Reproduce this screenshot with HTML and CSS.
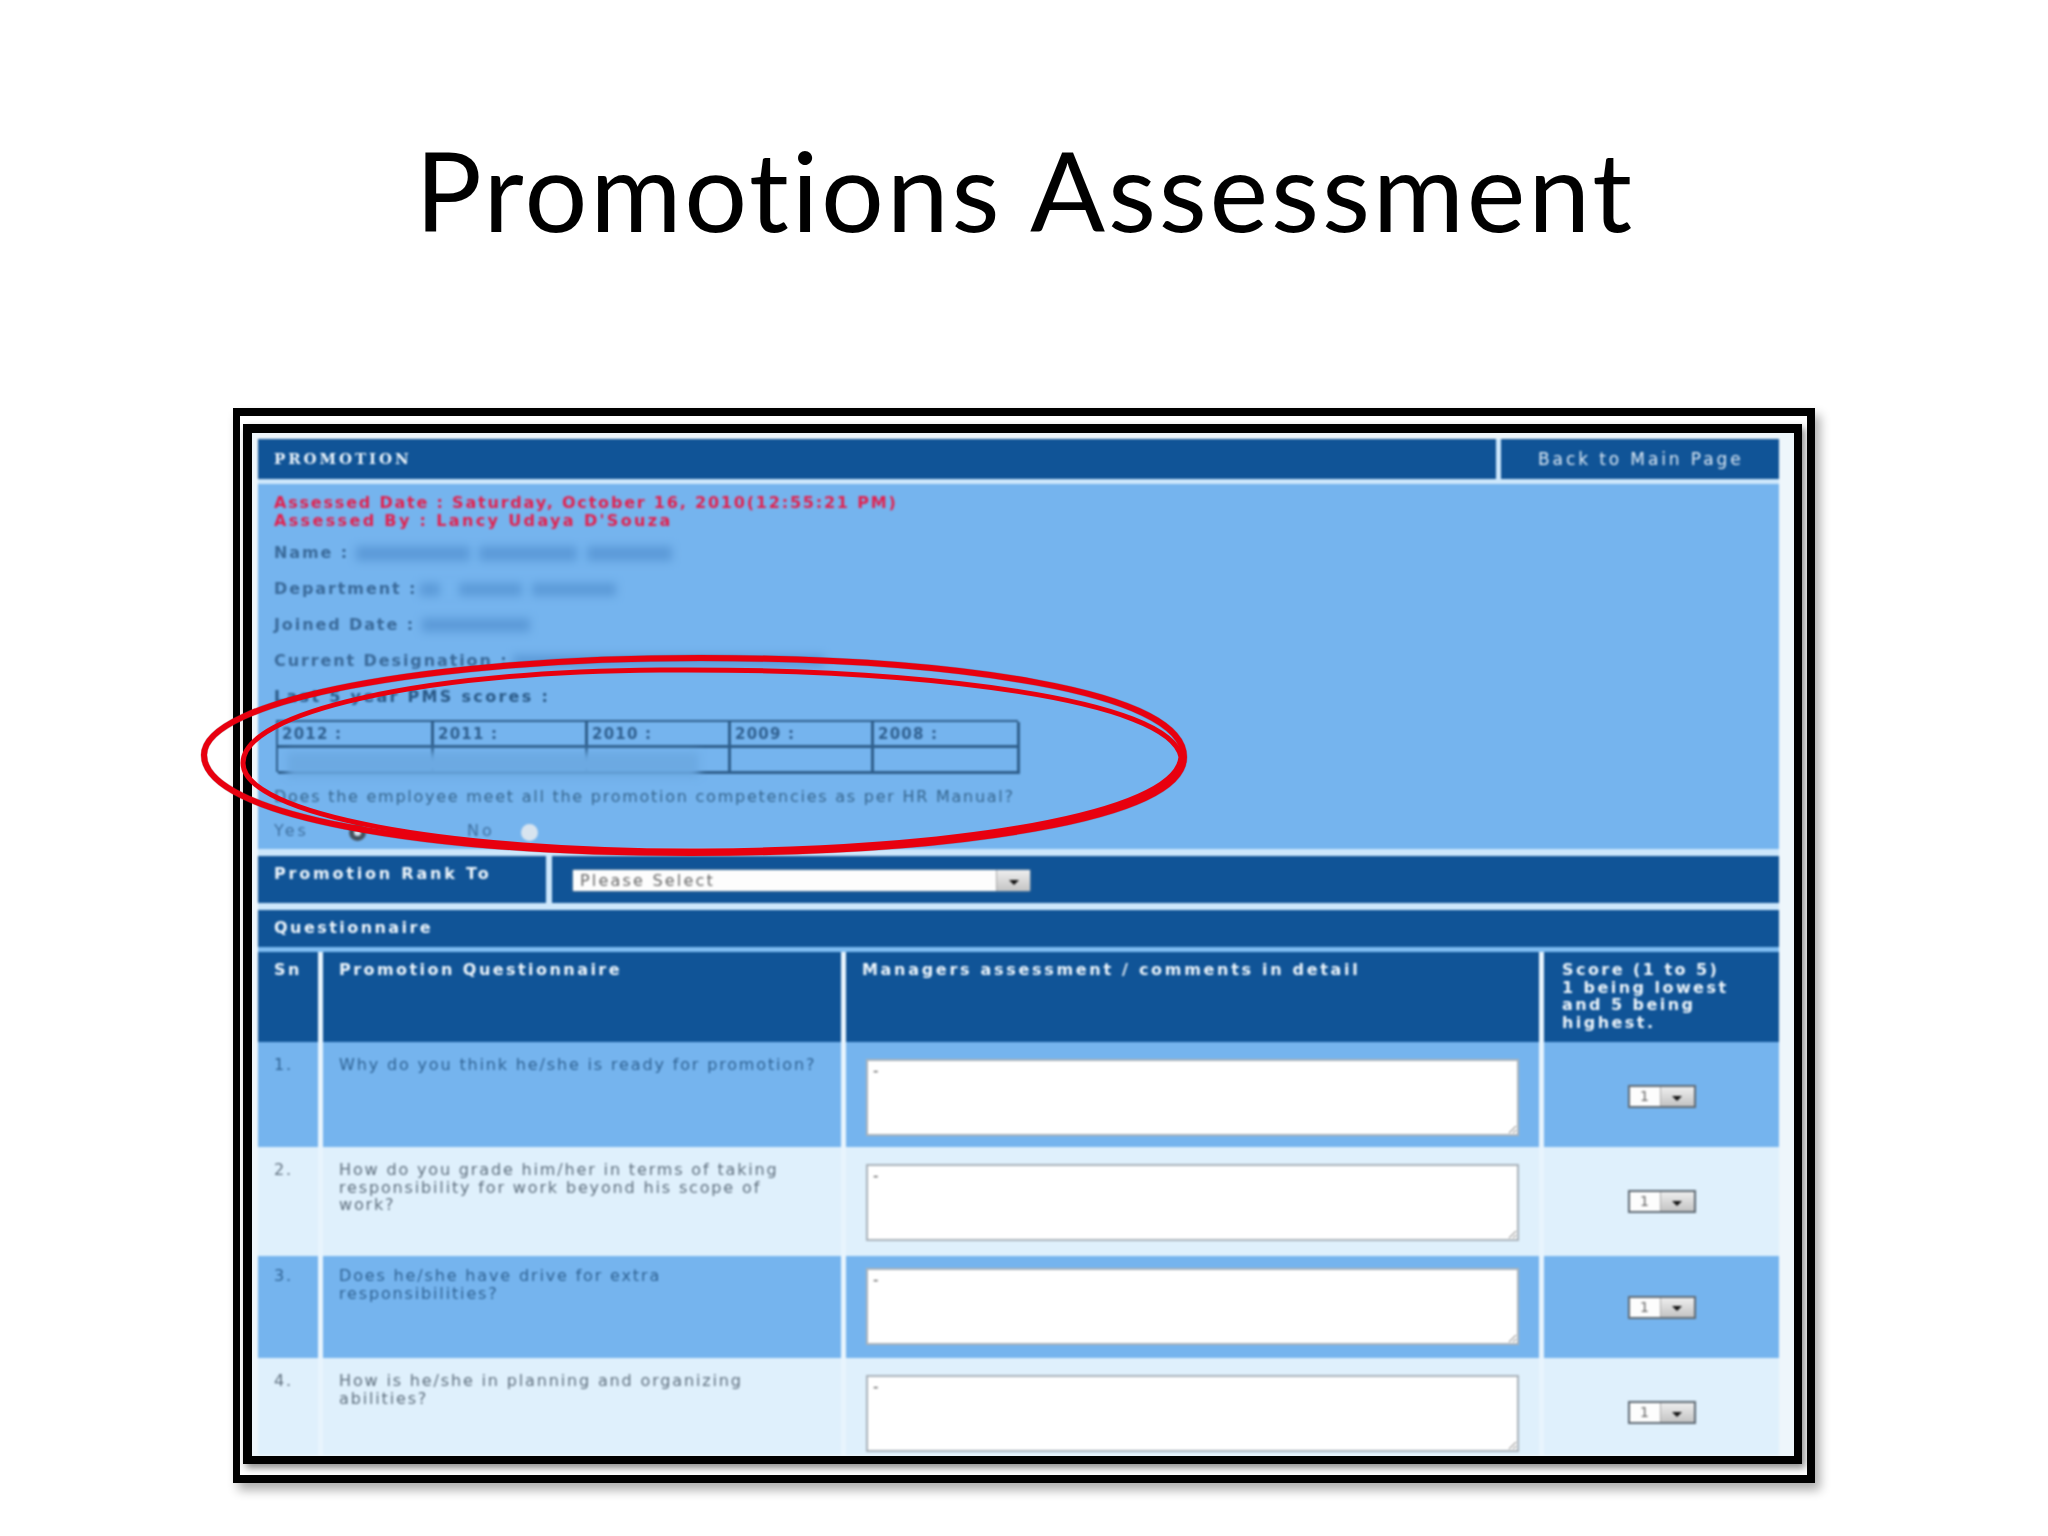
FILE: index.html
```html
<!DOCTYPE html>
<html lang="en">
<head>
<meta charset="utf-8">
<title>Promotions Assessment</title>
<link rel="stylesheet" href="styles.css">
</head>
<body>
<main class="slide">
  <h1 class="title">Promotions Assessment</h1>
  <div class="frame">
    <div class="frame-inner">
      <div class="shot">
        <div class="bar-top">
          <div class="dark cell-title strong">PROMOTION</div>
          <div class="dark cell-back">Back to Main Page</div>
        </div>
        <section class="panel">
          <div class="assessed">
            <div>Assessed Date : Saturday, October 16, 2010(12:55:21 PM)</div>
            <div class="assessed-by">Assessed By : Lancy Udaya D'Souza</div>
          </div>
          <div class="info"><span>Name :</span><i class="smudge smudge-name"></i></div>
          <div class="info"><span>Department :</span><i class="smudge smudge-dept"></i></div>
          <div class="info"><span>Joined Date :</span><i class="smudge smudge-date"></i></div>
          <div class="info"><span>Current Designation :</span><i class="smudge smudge-desig"></i></div>
          <div class="info info-last"><span>Last 5 year PMS scores :</span></div>
          <div class="scores">
            <div class="score-h">2012 :</div><div class="score-h">2011 :</div><div class="score-h">2010 :</div><div class="score-h">2009 :</div><div class="score-h">2008 :</div>
            <div class="score-v"></div><div class="score-v"></div><div class="score-v"></div><div class="score-v"></div><div class="score-v"></div>
            <i class="smudge smudge-scores"></i>
          </div>
          <div class="meet">Does the employee meet all the promotion competencies as per HR Manual?</div>
          <div class="answer">
            <span class="answer-yes">Yes</span><span class="radio radio-on"></span>
            <span class="answer-no">No</span><span class="radio"></span>
          </div>
        </section>
        <div class="bar-rank">
          <div class="dark rank-label strong">Promotion Rank To</div>
          <div class="dark rank-field">
            <div class="select select-wide"><span class="select-value">Please Select</span><span class="select-btn"></span></div>
          </div>
        </div>
        <div class="dark bar-q strong">Questionnaire</div>
        <div class="qgrid">
          <div class="dark qhead strong">Sn</div>
          <div class="dark qhead strong">Promotion Questionnaire</div>
          <div class="dark qhead strong qhead-wide">Managers assessment / comments in detail</div>
          <div class="dark qhead strong qhead-score">Score (1 to 5)<br>1 being lowest<br>and 5 being<br>highest.</div>

          <div class="q q-mid">1.</div>
          <div class="q q-mid">Why do you think he/she is ready for promotion?</div>
          <div class="q-mid q-box"><textarea class="answer-box" readonly>-</textarea></div>
          <div class="q-mid q-score q-score-low"><div class="select"><span class="select-value">1</span><span class="select-btn"></span></div></div>

          <div class="q q-pale">2.</div>
          <div class="q q-pale">How do you grade him/her in terms of taking responsibility for work beyond his scope of work?</div>
          <div class="q-pale q-box"><textarea class="answer-box" readonly>-</textarea></div>
          <div class="q-pale q-score"><div class="select"><span class="select-value">1</span><span class="select-btn"></span></div></div>

          <div class="q q-mid q-high">3.</div>
          <div class="q q-mid q-high">Does he/she have drive for extra responsibilities?</div>
          <div class="q-mid q-box q-box-high"><textarea class="answer-box" readonly>-</textarea></div>
          <div class="q-mid q-score"><div class="select"><span class="select-value">1</span><span class="select-btn"></span></div></div>

          <div class="q q-pale">4.</div>
          <div class="q q-pale">How is he/she in planning and organizing abilities?</div>
          <div class="q-pale q-box"><textarea class="answer-box" readonly>-</textarea></div>
          <div class="q-pale q-score q-score-low"><div class="select"><span class="select-value">1</span><span class="select-btn"></span></div></div>
        </div>
      </div>
    </div>
  </div>
  <svg class="marker" viewBox="0 0 2048 1536" aria-hidden="true">
    <path class="ring-shade" d="M1184 757C1184 690 950 658 700 658C430 658 204 700 204 755C204 815 420 853 690 853C950 853 1184 820 1184 757Z"/>
    <path class="ring" d="M1184 757C1184 690 950 658 700 658C430 658 204 700 204 755C204 815 420 853 690 853C950 853 1184 820 1184 757Z"/>
    <path class="ring ring-thin" d="M1181 757C1170 700 930 668 660 670C420 672 243 712 243 763C243 815 450 852 700 851C950 850 1176 815 1181 757Z"/>
  </svg>
</main>
</body>
</html>
```
FILE: styles.css
```css
* { box-sizing: border-box; }
html, body { margin: 0; padding: 0; background: #fff; }
body { width: 2048px; height: 1536px; overflow: hidden; }
.slide { position: relative; width: 2048px; height: 1536px; padding-top: 1px; }
.title {
  margin: 0;
  height: 407px;
  padding: 118px 0 0 2px;
  font: 400 111px/140px "Lato", "Open Sans", sans-serif;
  font-variant-ligatures: none;
  letter-spacing: 2.8px;
  color: #000;
  text-align: center;
}
.frame {
  width: 1582px;
  height: 1075px;
  margin-left: 233px;
  border: solid #000;
  border-width: 8px 8px 8px 7px;
  padding: 8px 5px 12px 3px;
  background: #fff;
  box-shadow: 5px 7px 10px rgba(0, 0, 0, .32);
}
.frame-inner {
  height: 1040px;
  border: solid #000;
  border-width: 9px 8px 8px 9px;
  padding: 6px 14px 0 6px;
  background: #eef6fb;
  box-shadow: 3px 4px 7px rgba(0, 0, 0, .45);
  overflow: hidden;
}
.shot {
  width: 1521px;
  height: 1016px;
  overflow: hidden;
  background: #cde7fb;
  font: 400 16px/18px "DejaVu Sans", "Liberation Sans", sans-serif;
  letter-spacing: 1.85px;
  filter: blur(.8px);
}
.dark { background: #105497; color: #eef6fc; }
.strong { font-weight: 700; letter-spacing: 2.45px; }
.bar-top { display: grid; grid-template-columns: 1fr 278px; column-gap: 5px; height: 39px; }
.cell-title.strong { padding: 11px 16px; font-family: "DejaVu Serif", "DejaVu Sans", serif; font-size: 15px; letter-spacing: 2.9px; }
.cell-back { padding: 11px 0 0 37px; font-size: 17px; letter-spacing: 2.9px; color: #dfebf6; }
.panel { height: 365px; margin-top: 6px; padding: 10px 16px 0; background: #75b4ee; color: #2f5f8f; position: relative; }
.assessed { color: #e3204e; font-weight: 700; letter-spacing: 1.8px; }
.assessed div { height: 18px; }
.assessed-by { letter-spacing: 2.35px; }
.info { display: flex; align-items: center; height: 18px; margin-top: 18px; font-weight: 700; color: #3a6a9a; letter-spacing: 1.9px; }
.assessed + .info { margin-top: 14px; }
.info-last { color: #2a5a88; letter-spacing: 2.3px; }
.smudge { display: block; background: #5c9ad8; filter: blur(4.5px); }
.smudge-name {
  width: 316px;
  height: 15px;
  margin-left: 7px;
  background: linear-gradient(90deg, #5c9ad8 0 36%, #75b4ee 36% 39%, #5c9ad8 39% 70%, #75b4ee 70% 73%, #5c9ad8 73%);
}
.smudge-dept {
  width: 196px;
  height: 13px;
  margin-left: 3px;
  background: linear-gradient(90deg, #5c9ad8 0 10%, #75b4ee 10% 20%, #5c9ad8 20% 52%, #75b4ee 52% 57%, #5c9ad8 57%);
}
.smudge-date { width: 108px; height: 14px; margin-left: 7px; }
.smudge-desig { width: 311px; height: 12px; margin-left: 4px; }
.scores {
  position: relative;
  display: grid;
  grid-template-columns: 156px 154px 143px 143px 146px;
  grid-template-rows: 26px 26px;
  width: 742px;
  height: 52px;
  margin: 14px 0 0 2px;
  border: solid #2f5f8c;
  border-width: 2px 0 0 2px;
  color: #2f5f8f;
  font-size: 15px;
  font-weight: 700;
  letter-spacing: 1.2px;
}
.score-h, .score-v { border: solid #2f5f8c; border-width: 0 3px 3px 0; padding: 3px 4px; }
.smudge-scores { position: absolute; left: 9px; top: 30px; width: 412px; height: 25px; background: #6ca9e2; }
.meet { margin-top: 16px; color: #36668f; letter-spacing: 1.75px; }
.answer { display: flex; align-items: center; height: 18px; margin-top: 16px; color: #3f70a0; letter-spacing: 3px; }
.answer-yes { width: 75px; }
.answer-no { width: 54px; margin-left: 101px; }
.radio { display: block; width: 17px; height: 17px; margin-top: 3px; border-radius: 50%; background: #d8e4ef; }
.radio-on { border: 5px solid #45525e; }
.bar-rank { display: grid; grid-template-columns: 288px 1fr; column-gap: 6px; height: 47px; margin-top: 7px; }
.rank-label.strong { padding: 9px 16px; letter-spacing: 2.8px; }
.rank-field { padding: 14px 0 0 21px; }
.select { display: flex; width: 68px; height: 23px; background: #fdfdfd; border: 2px solid #5f6a74; color: #666; line-height: 19px; letter-spacing: 0; font-size: 14px; }
.select-wide { width: 457px; height: 21px; border: 0; box-shadow: 0 0 2px #999; line-height: 21px; letter-spacing: 2.2px; font-size: 16px; }
.select-value { flex: 1; padding-left: 7px; }
.select-btn { position: relative; width: 34px; background: linear-gradient(#eee, #c4c4c4); border-left: 1px solid #aaa; }
.select-btn::after {
  content: "";
  position: absolute;
  left: 50%;
  top: 50%;
  margin: -1px 0 0 -5px;
  border: solid transparent;
  border-width: 5px 5px 0;
  border-top-color: #111;
}
.bar-q.strong { height: 37px; margin-top: 7px; padding: 9px 16px; }
.qgrid {
  display: grid;
  grid-template-columns: 60px 518px 693px 235px;
  grid-template-rows: 90px 105px 109px 102px 105px;
  column-gap: 5px;
  border-top: 5px solid #7ebcf1;
  background: #e8f4fd;
}
.qhead { padding: 9px 16px 0; line-height: 17.6px; }
.qhead-wide.strong { letter-spacing: 2.7px; }
.qhead-score { padding-left: 18px; }
.q { padding: 14px 22px 0 16px; line-height: 17.6px; }
.q-high { padding-top: 11px; }
.q-mid { background: #75b4ee; color: #2f6293; }
.q-pale { background: #dff0fc; color: #5f6f7e; }
.q-box { padding: 17px 0 0 20px; }
.q-box-high { padding-top: 12px; }
.answer-box {
  display: block;
  width: 653px;
  height: 77px;
  min-height: 77px;
  margin: 0;
  padding: 2px 5px;
  border: 2px solid #a9b2ba;
  background: #fff;
  color: #555;
  font: 400 15px/16px "DejaVu Sans", sans-serif;
  resize: both;
  outline: 0;
}
.q-score { display: flex; align-items: center; justify-content: center; }
.q-score-low { padding-top: 4px; }
.q-score .select-value { padding-left: 0; text-align: center; }
.marker { position: absolute; inset: 0; width: 2048px; height: 1536px; pointer-events: none; filter: blur(.4px); }
.ring, .ring-shade { fill: none; }
.ring { stroke: #e8000f; stroke-width: 6; }
.ring-thin { stroke-width: 5; }
.ring-shade { stroke: #7d3a4a; stroke-width: 7; opacity: .35; }
```
